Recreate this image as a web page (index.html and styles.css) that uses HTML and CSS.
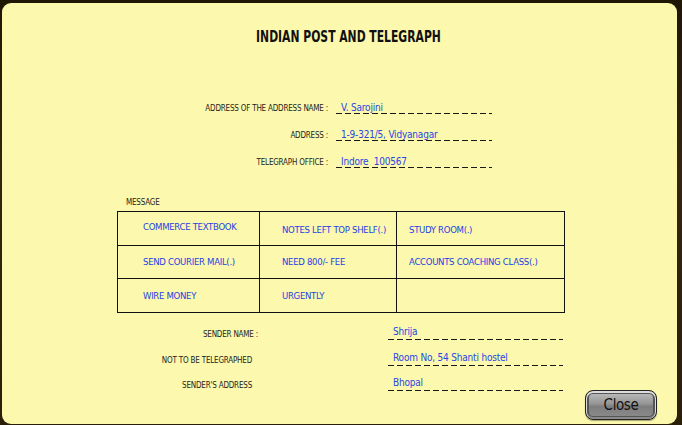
FILE: index.html
```html
<!DOCTYPE html>
<html lang="en">
<head>
<meta charset="utf-8">
<title>Indian Post and Telegraph</title>
<link rel="stylesheet" href="styles.css">
</head>
<body>
<div class="panel">
  <h1 class="title"><span class="title-text">INDIAN POST AND TELEGRAPH</span></h1>

  <div class="addr">
    <div class="addr-row">
      <div class="label">ADDRESS OF THE ADDRESS NAME :</div>
      <div class="value">V. Sarojini</div>
    </div>
    <div class="addr-row">
      <div class="label">ADDRESS :</div>
      <div class="value">1-9-321/5, Vidyanagar</div>
    </div>
    <div class="addr-row">
      <div class="label">TELEGRAPH OFFICE :</div>
      <div class="value">Indore&nbsp; 100567</div>
    </div>
  </div>

  <div class="msg-label">MESSAGE</div>
  <div class="msg-grid">
    <div class="cell c1 r1">COMMERCE TEXTBOOK</div>
    <div class="cell c2 low">NOTES LEFT TOP SHELF(.)</div>
    <div class="cell c3 low">STUDY ROOM(.)</div>
    <div class="cell c1">SEND COURIER MAIL(.)</div>
    <div class="cell c2">NEED 800/- FEE</div>
    <div class="cell c3">ACCOUNTS COACHING CLASS(.)</div>
    <div class="cell c1">WIRE MONEY</div>
    <div class="cell c2">URGENTLY</div>
    <div class="cell c3"></div>
  </div>

  <div class="sender">
    <div class="sender-row">
      <div class="label">SENDER NAME :</div>
      <div class="value">Shrija</div>
    </div>
    <div class="sender-row">
      <div class="label label-in">NOT TO BE TELEGRAPHED</div>
      <div class="value">Room No, 54 Shanti hostel</div>
    </div>
    <div class="sender-row">
      <div class="label label-in">SENDER'S ADDRESS</div>
      <div class="value">Bhopal</div>
    </div>
  </div>

  <div class="footer">
    <button class="close-btn" type="button">Close</button>
  </div>
</div>
</body>
</html>
```

FILE: styles.css
```css
html, body {
  margin: 0;
  padding: 0;
}
body {
  width: 682px;
  height: 425px;
  overflow: hidden;
  background: linear-gradient(#1f1604, #33260c 40%, #2a1f08);
  font-family: "DejaVu Sans Condensed", "DejaVu Sans", sans-serif;
}
.panel {
  box-sizing: border-box;
  margin: 3px 5px 0 2px;
  height: 421px;
  border-radius: 9px;
  background: #fcf8ad;
  padding-top: 25px;
  overflow: hidden;
}
.title {
  margin: 0;
  padding-left: 18px;
  height: 18px;
  line-height: 18px;
  font-size: 15px;
  font-weight: bold;
  color: #111;
  text-align: center;
}
.title-text {
  display: inline-block;
  transform: scaleX(0.8);
}
.addr {
  margin-top: 41px;
}
.addr-row {
  display: grid;
  grid-template-columns: 326px 156px;
  column-gap: 8px;
  height: 27px;
  align-items: end;
}
.label {
  font-size: 8px;
  line-height: 10px;
  letter-spacing: -0.2px;
  color: #1e1e1e;
  text-align: right;
  white-space: nowrap;
}
.value {
  font-size: 10px;
  line-height: 12px;
  letter-spacing: -0.2px;
  color: #2747e6;
  padding-left: 5px;
  white-space: nowrap;
  background-image: linear-gradient(to right, #1a1a1a 6px, transparent 6px);
  background-size: 9px 1px;
  background-repeat: repeat-x;
  background-position: left bottom;
}
.addr .label {
  padding-bottom: 0;
}
.msg-label {
  margin: 30px 0 0 124px;
  font-size: 8px;
  line-height: 10px;
  letter-spacing: -0.2px;
  color: #1e1e1e;
}
.msg-grid {
  margin: 3px 0 0 115px;
  display: grid;
  grid-template-columns: 142px 137px 168px;
  grid-auto-rows: 33.5px;
  width: max-content;
  border-top: 1px solid #111;
  border-left: 1px solid #111;
}
.cell {
  box-sizing: border-box;
  border-right: 1px solid #111;
  border-bottom: 1px solid #111;
  display: flex;
  align-items: center;
  font-size: 9.5px;
  letter-spacing: -0.3px;
  color: #1d3fe6;
  white-space: nowrap;
}
.c1 { padding-left: 25px; }
.c2 { padding-left: 22px; }
.c3 { padding-left: 12px; }
.r1 { padding-bottom: 3px; }
.low { padding-top: 3px; }
.sender {
  margin-top: 2px;
}
.sender-row {
  display: grid;
  grid-template-columns: 256px 175px;
  column-gap: 130px;
  height: 25.5px;
  align-items: end;
}
.sender .value {
  line-height: 14px;
  padding-bottom: 1px;
}
.sender .label {
  line-height: 9px;
  padding-bottom: 1px;
}
.label-in {
  padding-right: 6px;
}
.footer {
  display: flex;
  justify-content: flex-end;
  padding-right: 20px;
  margin-top: -1px;
}
.close-btn {
  box-sizing: border-box;
  width: 72px;
  height: 30px;
  border: 1px solid #222;
  border-radius: 8px;
  background: linear-gradient(#c2c2c2, #969696 45%, #7e7e7e 55%, #8c8c8c);
  box-shadow: inset 0 1px 0 1px #dcdcdc, inset 0 -1px 0 1px #8a8a8a, inset 0 0 0 3px #555, 0 1px 1px rgba(0,0,0,0.35);
  font-family: "DejaVu Sans Condensed", "DejaVu Sans", sans-serif;
  font-size: 15px;
  letter-spacing: -0.4px;
  color: #111;
  padding: 0;
  cursor: pointer;
}
```
